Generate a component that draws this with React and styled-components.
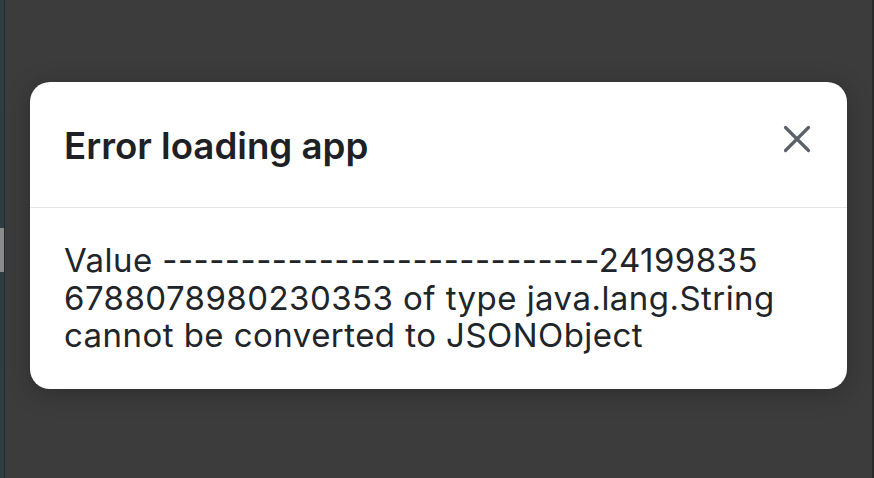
import styled, { createGlobalStyle } from "styled-components";

const GlobalStyle = createGlobalStyle`
  html, body {
    margin: 0;
    padding: 0;
    height: 100%;
    background: #3c3c3c;
  }
  #root {
    height: 100%;
  }
`;

const Screen = styled.div`
  display: flex;
  width: 874px;
  height: 478px;
  overflow: hidden;
  font-family: Inter, "Noto Sans", sans-serif;
`;

const SideStrip = styled.div`
  width: 4px;
  flex-shrink: 0;
  display: flex;
  flex-direction: column;
  padding-top: 228px;
  background: #2f3d43;
  border-right: 1px solid #222b2f;
`;

const SideItem = styled.div`
  height: 44px;
  background: ${(p) => (p.$active ? "#8b8b8b" : "transparent")};
`;

const Backdrop = styled.div`
  flex: 1;
  display: flex;
  align-items: flex-start;
  padding: 82px 25px 0 25px;
  background: #3c3c3c;
  border-right: 2px solid #2a2a2a;
`;

const Dialog = styled.div`
  flex: 1;
  background: #ffffff;
  border-radius: 20px;
  box-shadow: 0 4px 24px rgba(0, 0, 0, 0.25);
  display: flex;
  flex-direction: column;
`;

const Header = styled.div`
  height: 126px;
  box-sizing: border-box;
  display: flex;
  align-items: center;
  justify-content: space-between;
  padding: 0 34px;
  border-bottom: 1px solid #e3e5e8;
`;

const Title = styled.h2`
  margin: 0;
  font-size: 36.7px;
  font-weight: 600;
  color: #1d2024;
  padding-top: 2px;
`;

const CloseButton = styled.button`
  border: none;
  background: transparent;
  padding: 0;
  width: 32px;
  height: 32px;
  display: flex;
  align-items: center;
  justify-content: center;
  cursor: pointer;
  margin-top: -12px;
`;

const Body = styled.div`
  padding: 34px;
  font-size: 33px;
  line-height: 37.5px;
  letter-spacing: 0.45px;
  color: #212428;
`;

function CloseIcon() {
  return (
    <svg width="28" height="28" viewBox="0 0 28 28" fill="none">
      <path
        d="M2.5 2.5L25.5 25.5M25.5 2.5L2.5 25.5"
        stroke="#5b6168"
        strokeWidth="3.2"
        strokeLinecap="round"
      />
    </svg>
  );
}

function App() {
  const dashes = "-".repeat(28);
  return (
    <>
      <GlobalStyle />
      <Screen>
        <SideStrip>
          <SideItem $active />
        </SideStrip>
        <Backdrop>
          <Dialog>
            <Header>
              <Title>Error loading app</Title>
              <CloseButton aria-label="Close">
                <CloseIcon />
              </CloseButton>
            </Header>
            <Body>
              Value {dashes}24199835
              <br />
              6788078980230353 of type java.lang.String
              <br />
              cannot be converted to JSONObject
            </Body>
          </Dialog>
        </Backdrop>
      </Screen>
    </>
  );
}

export default App;
